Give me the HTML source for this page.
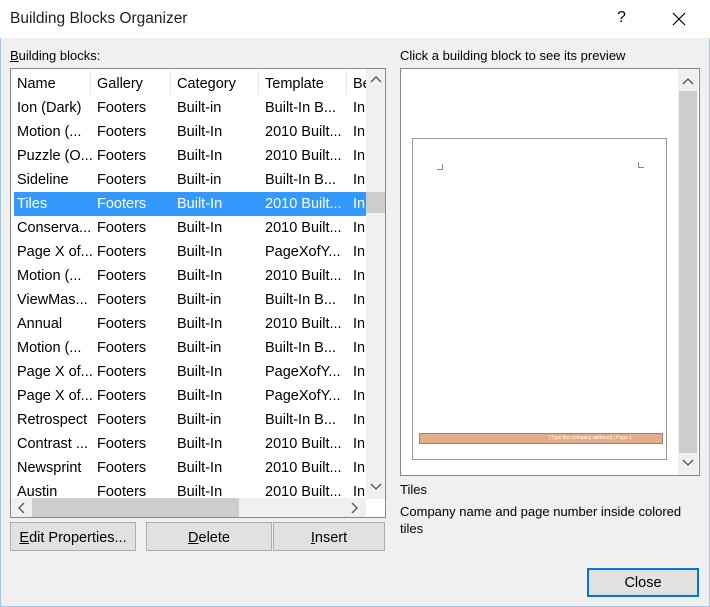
<!DOCTYPE html>
<html><head><style>
*{margin:0;padding:0;box-sizing:border-box}
body{width:710px;height:607px;background:#f0f0f0;font-family:"Liberation Sans",sans-serif;font-size:14.5px;color:#000;position:relative;overflow:hidden}
.a{position:absolute;white-space:nowrap}
.title{left:0;top:0;width:710px;height:38px;background:#fff}
.list{left:10px;top:68px;width:376px;height:450px;background:#fff;border:1px solid #828790;overflow:hidden}
.row{position:absolute;left:3px;width:352px;height:24px;line-height:25px}
.row span{position:absolute;overflow:hidden}
.btn{position:absolute;height:29px;background:#e1e1e1;border:1px solid #adadad;text-align:center;line-height:30px}
</style></head><body>
<div class="a" style="left:0;top:0;width:710px;height:607px;border:1px solid #a9c4e6;border-top:none"></div>
<div class="a title"></div>
<div class="a" style="left:10px;top:10px;font-size:15.5px;color:#222">Building Blocks Organizer</div>
<div class="a" style="left:617px;top:9px;font-size:16px">?</div>
<svg class="a" style="left:672px;top:12px" width="14" height="14"><path d="M1 1L13 13M13 1L1 13" stroke="#000" stroke-width="1.2"/></svg>
<div class="a" style="left:10px;top:48px;font-size:13px"><u>B</u>uilding blocks:</div>
<div class="a" style="left:400px;top:48px;font-size:13px">Click a building block to see its preview</div>
<div class="a list">
<div style="position:absolute;left:355px;top:0;width:19px;height:430px;background:#f0f0f0"></div>
<div style="position:absolute;left:355px;top:123px;width:19px;height:21px;background:#cdcdcd"></div>
<svg style="position:absolute;left:359px;top:6px" width="12" height="8"><path d="M1 7L6 2L11 7" stroke="#606060" stroke-width="1.5" fill="none"/></svg>
<svg style="position:absolute;left:359px;top:414px" width="12" height="8"><path d="M1 1L6 6L11 1" stroke="#606060" stroke-width="1.5" fill="none"/></svg>
<div style="position:absolute;left:0;top:429px;width:355px;height:19px;background:#f0f0f0"></div>
<div style="position:absolute;left:21px;top:429px;width:207px;height:19px;background:#cdcdcd"></div>
<svg style="position:absolute;left:6px;top:433px" width="8" height="12"><path d="M7 1L2 6L7 11" stroke="#606060" stroke-width="1.5" fill="none"/></svg>
<svg style="position:absolute;left:340px;top:433px" width="8" height="12"><path d="M1 1L6 6L1 11" stroke="#606060" stroke-width="1.5" fill="none"/></svg>
<div style="position:absolute;left:79px;top:2px;width:1px;height:24px;background:#e5e5e5"></div>
<div style="position:absolute;left:159px;top:2px;width:1px;height:24px;background:#e5e5e5"></div>
<div style="position:absolute;left:247px;top:2px;width:1px;height:24px;background:#e5e5e5"></div>
<div style="position:absolute;left:335px;top:2px;width:1px;height:24px;background:#e5e5e5"></div>
<div id="rows"></div>
</div>
<script>
var d=[["Name","Gallery","Category","Template","Be"],
["Ion (Dark)","Footers","Built-in","Built-In B..."],
["Motion (...","Footers","Built-In","2010 Built..."],
["Puzzle (O...","Footers","Built-In","2010 Built..."],
["Sideline","Footers","Built-in","Built-In B..."],
["Tiles","Footers","Built-In","2010 Built..."],
["Conserva...","Footers","Built-In","2010 Built..."],
["Page X of...","Footers","Built-In","PageXofY..."],
["Motion (...","Footers","Built-In","2010 Built..."],
["ViewMas...","Footers","Built-in","Built-In B..."],
["Annual","Footers","Built-In","2010 Built..."],
["Motion (...","Footers","Built-in","Built-In B..."],
["Page X of...","Footers","Built-In","PageXofY..."],
["Page X of...","Footers","Built-In","PageXofY..."],
["Retrospect","Footers","Built-in","Built-In B..."],
["Contrast ...","Footers","Built-In","2010 Built..."],
["Newsprint","Footers","Built-In","2010 Built..."],
["Austin","Footers","Built-In","2010 Built..."]];
var h="";
d.forEach(function(r,i){var s=i==5;var t=i==0?3:27+24*(i-1);
h+='<div class="row" style="top:'+t+'px;'+(s?'background:#3399ff;color:#fff':'')+'">';
var x=[3,83,163,251,339];
for(var j=0;j<5;j++){var v=j<4?r[j]:(i==0?"Be":"In");h+='<span style="left:'+x[j]+'px;width:'+(j==4?13:78)+'px">'+v+'</span>';}
h+='</div>';});
document.getElementById("rows").innerHTML=h;
</script>
<div class="btn" style="left:10px;top:522px;width:126px"><u>E</u>dit Properties...</div>
<div class="btn" style="left:146px;top:522px;width:126px"><u>D</u>elete</div>
<div class="btn" style="left:273px;top:522px;width:112px"><u>I</u>nsert</div>
<div class="a" style="left:400px;top:68px;width:300px;height:408px;background:#fff;border:1px solid #828790">
<div style="position:absolute;left:277px;top:0;width:20px;height:406px;background:#f0f0f0"></div>
<div style="position:absolute;left:278px;top:22px;width:18px;height:362px;background:#cdcdcd"></div>
<svg style="position:absolute;left:281px;top:8px" width="12" height="8"><path d="M1 7L6 2L11 7" stroke="#606060" stroke-width="1.5" fill="none"/></svg>
<svg style="position:absolute;left:281px;top:390px" width="12" height="8"><path d="M1 1L6 6L11 1" stroke="#606060" stroke-width="1.5" fill="none"/></svg>
<div style="position:absolute;left:11px;top:69px;width:255px;height:322px;border:1px solid #999;background:#fff"></div>
<div style="position:absolute;left:36px;top:95px;width:6px;height:6px;border-right:1px solid #888;border-bottom:1px solid #888"></div>
<div style="position:absolute;left:237px;top:93px;width:6px;height:6px;border-left:1px solid #888;border-bottom:1px solid #888"></div>
<div style="position:absolute;left:18px;top:364px;width:244px;height:11px;background:#e3ad89;border:1px solid #888;font-size:5px;color:#fff;line-height:9px;text-align:right;padding-right:30px">[Type the company address] | Page 1</div>
</div>
<div class="a" style="left:400px;top:482px;font-size:13px">Tiles</div>
<div class="a" style="left:400px;top:503px;font-size:13px;line-height:17px;white-space:normal;width:300px">Company name and page number inside colored tiles</div>
<div class="btn" style="left:587px;top:568px;width:112px;border:2px solid #0078d7;line-height:27px">Close</div>
</body></html>
